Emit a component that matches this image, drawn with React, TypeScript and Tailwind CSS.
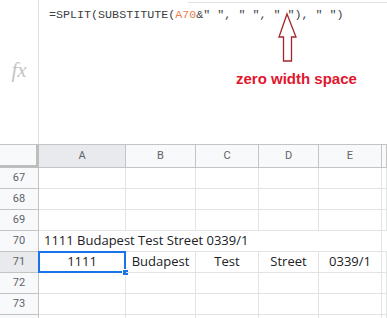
import React from 'react';

const cols = [
  { name: 'A', w: 'w-[87px]' },
  { name: 'B', w: 'w-[70px]' },
  { name: 'C', w: 'w-[63px]' },
  { name: 'D', w: 'w-[60px]' },
  { name: 'E', w: 'w-[63px]' },
  { name: '', w: 'w-[5px]' },
];

const row71 = ['1111', 'Budapest', 'Test', 'Street', '0339/1', ''];

const App: React.FC = () => {
  return (
    <div className="w-[387px] h-[318px] bg-white overflow-hidden font-['Liberation_Sans',sans-serif] text-[#202124]">
      {/* Formula bar */}
      <div className="relative flex h-[144px]">
        <div className="w-[39px] border-r border-[#e0e0e0] flex items-center justify-center pb-[2px]">
          <span className="font-['Liberation_Serif',serif] italic text-[21px] text-[#c4c4c4]">fx</span>
        </div>
        <div className="flex-1 pl-[10px] pt-[7px] font-['Liberation_Mono',monospace] text-[11.7px] text-[#3c4043] whitespace-pre">
          =SPLIT(SUBSTITUTE(<span className="text-[#e8814e]">A70</span>&amp;" ", " ", "{'\u00a0'}"), " ")
        </div>
        <div className="absolute top-[2px] left-[188px] right-0 h-px bg-[#e3e3e3]" />
        <svg className="absolute left-[277px] top-[12px]" width="22" height="52" viewBox="0 0 22 52">
          <path d="M10 2 L19 25 L14.5 25 L14.5 49 L6.5 49 L6.5 25 L2 25 Z" fill="none" stroke="#a3242c" strokeWidth="1.3" strokeLinejoin="miter" />
        </svg>
        <div className="absolute left-[236px] top-[69px] text-[15px] font-bold text-[#e3162d] leading-[20px]">zero width space</div>
      </div>

      {/* Column headers */}
      <div className="flex h-[24px] border-t border-[#c4c4c4]">
        <div className="w-[39px] bg-[#f8f9fa] border-r-[3px] border-b-[3px] border-[#bdbdbd]" />
        {cols.map((c, i) => (
          <div
            key={i}
            className={`${c.w} shrink-0 border-r border-b border-[#c4c4c4] flex items-center justify-center text-[11px] text-[#5f6368] font-['Roboto',sans-serif] ${i === 0 ? 'bg-[#e8eaed]' : 'bg-[#f8f9fa]'}`}
          >
            {c.name}
          </div>
        ))}
      </div>

      {/* Rows */}
      {[67, 68, 69, 70, 71, 72, 73, 74].map((r) => (
        <div key={r} className={`flex h-[21px] ${r === 71 ? 'relative z-10' : ''}`}>
          <div
            className={`w-[39px] shrink-0 border-r border-b border-[#c4c4c4] flex items-center justify-center text-[11px] text-[#5f6368] font-['Roboto',sans-serif] ${r === 71 ? 'bg-[#e8eaed]' : 'bg-[#f8f9fa]'}`}
          >
            {r < 74 ? r : ''}
          </div>
          {r === 70 ? (
            <>
              <div className="w-[280px] shrink-0 border-b border-[#e2e3e3] flex items-end pb-[1px] pl-[5px] text-[13px] font-['Open_Sans',sans-serif] whitespace-nowrap">
                1111 Budapest Test Street 0339/1
              </div>
              <div className="w-[63px] shrink-0 border-r border-b border-[#e2e3e3]" />
              <div className="w-[5px] shrink-0 border-b border-[#e2e3e3]" />
            </>
          ) : (
            cols.map((c, i) => (
              <div
                key={i}
                className={`${c.w} shrink-0 border-r border-b border-[#e2e3e3] relative flex items-end justify-center pb-[1px] text-[13px] font-['Open_Sans',sans-serif]`}
              >
                {r === 71 ? row71[i] : ''}
                {r === 71 && i === 0 && (
                  <>
                    <div className="absolute -left-px -top-px right-[-1px] bottom-[-1px] border-2 border-[#1a73e8]" />
                    <div className="absolute right-[-4px] bottom-[-4px] w-[7px] h-[7px] bg-[#1a73e8] border border-white" />
                  </>
                )}
              </div>
            ))
          )}
        </div>
      ))}
    </div>
  );
};

export default App;
